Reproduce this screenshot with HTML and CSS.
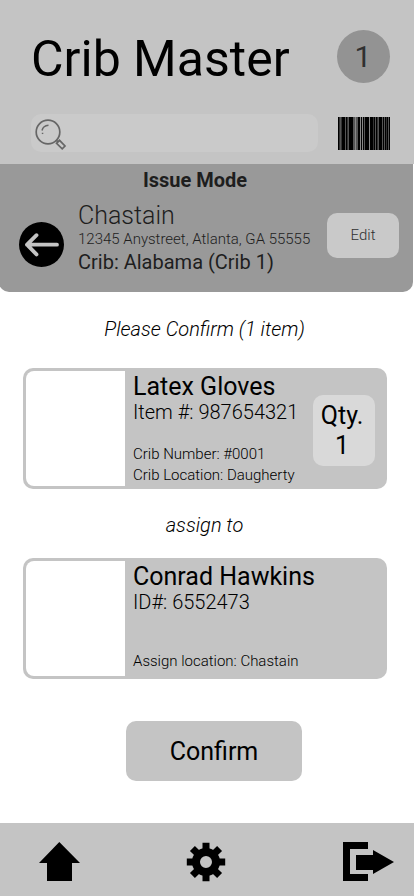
FILE: index.html
```html
<!DOCTYPE html>
<html lang="en">
<head>
    <meta charset="UTF-8">
    <meta name="viewport" content="width=device-width, initial-scale=1.0">
    <title>Crib Master</title>
    <link rel="stylesheet" href="styles.css">
</head>
<body>
    <header class="header">
        <div class="title-row">
            <h1>Crib Master</h1>
            <span class="cart-count">1</span>
        </div>
        <div class="search-row">
            <div class="search-bar">
                <svg width="32" height="32" viewBox="0 0 32 32" fill="none" stroke="#666" stroke-width="1.7">
                    <circle cx="13" cy="13" r="11.8"/>
                    <path d="M7 11.500c.7-3.200 3.200-5 6.500-5.200" stroke-width="1.500"/>
                    <path d="M6.800 14.400h1.500" stroke-width="1.300"/>
                    <path d="M21.200 21.200l2 2"/>
                    <path d="M21.500 24.300l3-3 5.500 5.700-2.800 2.900z"/>
                </svg>
            </div>
            <svg class="barcode" width="52" height="33" viewBox="0 0 52 33" shape-rendering="crispEdges">
                <rect width="52" height="33" fill="#000"/>
                <path fill="#333" d="M1 0h1v33h-1zM3 0h1v33h-1zM9 0h1v33h-1zM35 0h1v33h-1zM39 0h1v33h-1zM48 0h1v33h-1z"/>
                <path fill="#555" d="M2 0h1v33h-1zM7 0h1v33h-1zM10 0h1v33h-1zM15 0h2v33h-2zM18 0h2v33h-2zM26 0h1v33h-1zM37 0h1v33h-1zM40 0h1v33h-1zM44 0h1v33h-1zM46 0h1v33h-1zM50 0h1v33h-1z"/>
                <path fill="#888" d="M17 0h1v33h-1zM22 0h1v33h-1zM24 0h1v33h-1zM31 0h1v33h-1z"/>
            </svg>
        </div>
    </header>

    <section class="mode">
        <h2>Issue Mode</h2>
        <div class="mode-row">
            <svg class="back" width="45" height="45" viewBox="0 0 45 45">
                <circle cx="22.500" cy="22.500" r="22.500"/>
                <path d="M38 22.700H8M17.500 13.200L8 22.700l9.500 9.700" fill="none" stroke="#c4c4c4" stroke-width="3.800" stroke-linecap="round" stroke-linejoin="round"/>
            </svg>
            <div class="site">
                <p class="site-name">Chastain</p>
                <p class="site-address">12345 Anystreet, Atlanta, GA 55555</p>
                <p class="site-crib">Crib: Alabama (Crib 1)</p>
            </div>
            <button class="edit-btn">Edit</button>
        </div>
    </section>

    <main>
        <p class="prompt">Please Confirm (1 item)</p>

        <div class="card">
            <div class="photo"></div>
            <div class="details">
                <p class="name">Latex Gloves</p>
                <p class="number">Item #: 987654321</p>
                <div class="meta">
                    <p>Crib Number: #0001</p>
                    <p>Crib Location: Daugherty</p>
                </div>
            </div>
            <div class="qty">Qty.<br>1</div>
        </div>

        <p class="prompt assign">assign to</p>

        <div class="card">
            <div class="photo"></div>
            <div class="details">
                <p class="name">Conrad Hawkins</p>
                <p class="number">ID#: 6552473</p>
                <div class="meta person">
                    <p>Assign location: Chastain</p>
                </div>
            </div>
        </div>

        <button class="confirm-btn">Confirm</button>
    </main>

    <nav class="nav">
        <svg width="41" height="40" viewBox="0 0 41 40">
            <path d="M20.300 0L41 21H33V39H8V21H0z"/>
        </svg>
        <svg class="settings" width="40" height="40" viewBox="-20 -20 40 40">
            <path id="tooth" d="M-3.500 -19.200h7v8h-7zM-3.500 11.200h7v8h-7z"/>
            <use href="#tooth" transform="rotate(45)"/>
            <use href="#tooth" transform="rotate(90)"/>
            <use href="#tooth" transform="rotate(135)"/>
            <circle r="10" fill="none" stroke="#000" stroke-width="8"/>
        </svg>
        <svg width="51" height="40" viewBox="0 0 51 40">
            <path d="M0 0h25v7H7v25h18v7H0zM13 13h17V8l21 12-21 12v-4H13z"/>
        </svg>
    </nav>
</body>
</html>
```
FILE: styles.css
```css
* {
    box-sizing: border-box;
}

body {
    font-family: Roboto, sans-serif;
    margin: 0;
    height: 896px;
    display: flex;
    flex-direction: column;
    background-color: #fff;
    color: #000;
}

h1, h2, p {
    margin: 0;
    font-weight: 400;
}

svg {
    display: block;
    flex: none;
}

button {
    border: none;
    font-family: inherit;
    padding: 0;
    color: #000;
}

.header {
    height: 164px;
    padding: 30px 24px 0 31px;
    background: #c4c4c4;
}

.title-row,
.search-row {
    display: flex;
    justify-content: space-between;
}

h1 {
    font-size: 50px;
    line-height: 58px;
}

.cart-count {
    width: 53px;
    height: 53px;
    padding-right: 1px;
    border-radius: 50%;
    background: #939393;
    color: #303030;
    font-size: 30px;
    line-height: 53px;
    text-align: center;
}

.search-row {
    margin-top: 26px;
}

.search-bar {
    width: 287px;
    height: 38px;
    padding: 5px 4px;
    border-radius: 10px;
    background: #cacaca;
}

.barcode {
    margin-top: 3px;
}

.mode {
    height: 128px;
    margin: 0 1px 0 -1px;
    padding: 5px 14px 0 20px;
    border-radius: 0 0 10px 10px;
    background: #999;
    color: #1e1e1e;
}

.mode h2 {
    padding-right: 28px;
    font-size: 20px;
    line-height: 22px;
    font-weight: 700;
    text-align: center;
}

.mode-row {
    display: flex;
    align-items: flex-start;
    margin-top: 11px;
}

.back {
    margin-top: 20px;
}

.site {
    flex: 1;
    margin-left: 14px;
    white-space: nowrap;
}

.site-name {
    font-size: 25px;
    line-height: 28px;
    font-weight: 300;
}

.site-address {
    font-size: 15px;
    line-height: 18px;
    font-weight: 300;
}

.site-crib {
    margin-top: 2px;
    font-size: 20px;
    line-height: 24px;
}

.edit-btn {
    width: 72px;
    height: 45px;
    margin-top: 11px;
    padding-bottom: 1px;
    border-radius: 10px;
    background: #c9c9c9;
    color: #303030;
    font-size: 15px;
    font-weight: 300;
}

main {
    flex: 1;
    padding: 25px 27px 0 23px;
}

.prompt {
    padding-right: 1px;
    font-size: 20px;
    line-height: 24px;
    font-weight: 300;
    font-style: italic;
    text-align: center;
}

.card {
    display: flex;
    height: 121px;
    margin-top: 27px;
    padding: 3px 12px 3px 3px;
    border-radius: 10px;
    background: #c4c4c4;
}

.photo {
    width: 99px;
    border-radius: 8px 0 0 8px;
    background: #fff;
}

.details {
    flex: 1;
    display: flex;
    flex-direction: column;
    padding: 2px 0 0 8px;
    white-space: nowrap;
}

.name {
    font-size: 25px;
    line-height: 28px;
}

.number {
    font-size: 20px;
    line-height: 22px;
    font-weight: 300;
}

.meta {
    margin-top: auto;
    font-size: 15px;
    line-height: 21px;
}

.meta p {
    font-weight: 300;
}

.person {
    margin-bottom: 4px;
}

.qty {
    width: 62px;
    height: 71px;
    margin-top: 24px;
    padding: 6px 4px 0 0;
    border-radius: 10px;
    background: #d9d9d9;
    font-size: 25px;
    line-height: 30px;
    text-align: center;
}

.assign {
    margin-top: 24px;
}

.assign + .card {
    margin-top: 21px;
}

.confirm-btn {
    display: block;
    width: 176px;
    height: 60px;
    margin: 42px 0 0 103px;
    border-radius: 10px;
    background: #c4c4c4;
    font-size: 25px;
}

.nav {
    display: flex;
    justify-content: space-between;
    height: 73px;
    padding: 19px 20px 0 39px;
    background: #c4c4c4;
}

.settings {
    margin-right: 11px;
}
```
